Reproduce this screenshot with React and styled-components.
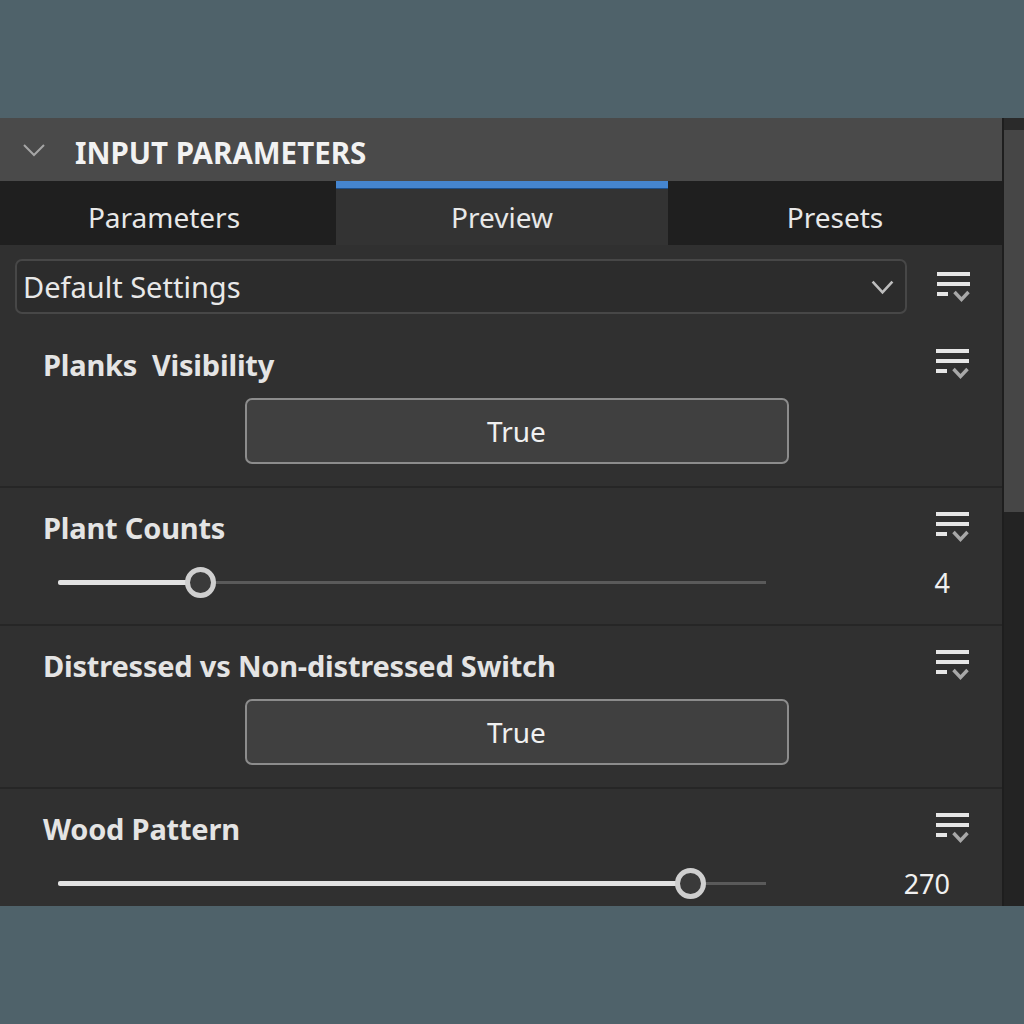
import React from "react";
import styled, { createGlobalStyle } from "styled-components";

const GlobalStyle = createGlobalStyle`
  html, body { margin: 0; padding: 0; }
  body {
    background: #4f626a;
    font-family: "Noto Sans", "Open Sans", "DejaVu Sans", sans-serif;
    color: #e6e6e6;
  }
  * { box-sizing: border-box; }
`;

const Page = styled.div`
  width: 1024px;
  height: 1024px;
  padding-top: 118px;
  overflow: hidden;
`;

const Panel = styled.div`
  display: flex;
  height: 788px;
  width: 1024px;
  overflow: hidden;
`;

const Main = styled.div`
  width: 1002px;
  display: flex;
  flex-direction: column;
  background: #303030;
  overflow: hidden;
  & > * { flex-shrink: 0; }
`;

const Scrollbar = styled.div`
  width: 22px;
  display: flex;
  flex-direction: column;
  background: #232323;
  border-left: 2px solid #1e1e1e;
`;

const ScrollTop = styled.div`
  height: 12px;
  background: #2a2a2a;
`;

const ScrollThumb = styled.div`
  height: 382px;
  background: #464646;
`;

const Header = styled.div`
  height: 63px;
  background: #4a4a4a;
  display: flex;
  align-items: center;
  padding-left: 22px;
  gap: 29px;
`;

const HeaderTitle = styled.div`
  font-weight: 700;
  font-size: 29.5px;
  color: #f2f2f2;
  padding-top: 5px;
`;

const Tabs = styled.div`
  height: 64px;
  display: grid;
  grid-template-columns: 336px 332px 1fr;
  background: #1e1e1e;
`;

const Tab = styled.div`
  display: flex;
  align-items: center;
  justify-content: center;
  font-size: 28px;
  color: #e8e8e8;
  background: ${(p) => (p.$active ? "#333333" : "#1f1f1f")};
  border-top: ${(p) => (p.$active ? "7px solid #4585cf" : "none")};
  box-shadow: ${(p) => (p.$active ? "inset 0 1px 0 #1d4f8a" : "none")};
  padding-top: ${(p) => (p.$active ? "0" : "7px")};
  padding-right: ${(p) => (p.$first ? "8px" : "0")};
`;

const Content = styled.div`
  display: flex;
  flex-direction: column;
  padding-top: 14px;
  & > * { flex-shrink: 0; }
`;

const DropdownRow = styled.div`
  display: flex;
  align-items: center;
  padding-left: 15px;
  gap: 30px;
  height: 55px;
`;

const Dropdown = styled.div`
  width: 892px;
  height: 55px;
  border: 2px solid #474747;
  border-radius: 7px;
  background: #2c2c2c;
  display: flex;
  align-items: center;
  justify-content: space-between;
  padding: 0 10px 0 6px;
  font-size: 29px;
  color: #e8e8e8;
`;

const Section = styled.div`
  height: ${(p) => p.$h}px;
  border-bottom: ${(p) => (p.$last ? "none" : "2px solid #262626")};
  display: flex;
  flex-direction: column;
  padding-top: ${(p) => p.$pt || 0}px;
`;

const TitleRow = styled.div`
  height: 50px;
  display: flex;
  align-items: center;
  justify-content: space-between;
  padding: 0 32px 0 43px;
`;

const Title = styled.div`
  font-weight: 700;
  font-size: 29px;
  letter-spacing: -0.2px;
  color: #e4e4e4;
  white-space: pre;
`;

const ButtonWrap = styled.div`
  display: flex;
  justify-content: center;
  padding: 0 12px 0 43px;
  margin-top: 9px;
`;

const ValueButton = styled.div`
  width: 544px;
  height: 66px;
  border: 2px solid #8c8c8c;
  border-radius: 7px;
  background: #404040;
  display: flex;
  align-items: center;
  justify-content: center;
  font-size: 28px;
  color: #f0f0f0;
`;

const SliderRow = styled.div`
  display: flex;
  align-items: center;
  padding: 0 52px 0 58px;
  height: 40px;
  margin-top: 10px;
`;

const Track = styled.div`
  position: relative;
  width: 708px;
  height: 3px;
  background: #5a5a5a;
`;

const Fill = styled.div`
  position: absolute;
  left: 0;
  top: -1px;
  height: 5px;
  background: #e2e2e2;
  border-radius: 2px;
`;

const Thumb = styled.div`
  position: absolute;
  top: 50%;
  width: 31px;
  height: 31px;
  margin-left: -15px;
  margin-top: -15px;
  border-radius: 50%;
  border: 5px solid #cfcfcf;
  background: #3a3a3a;
`;

const Value = styled.div`
  flex: 1;
  text-align: right;
  font-size: 27px;
  color: #f0f0f0;
`;

const MenuIcon = () => (
  <svg width="34" height="34" viewBox="0 0 34 34">
    <rect x="0" y="2" width="33" height="4" fill="#e6e6e6" />
    <rect x="0" y="12" width="33" height="4" fill="#e6e6e6" />
    <rect x="0" y="22" width="11" height="4" fill="#e6e6e6" />
    <polyline points="17.5,22 24.5,29.5 31.5,22" fill="none" stroke="#a8a8a8" strokeWidth="3.4" />
  </svg>
);

const Chevron = ({ w, h, color, sw }) => (
  <svg width={w} height={h} viewBox={`0 0 ${w} ${h}`}>
    <polyline
      points={`${sw},${sw} ${w / 2},${h - sw} ${w - sw},${sw}`}
      fill="none"
      stroke={color}
      strokeWidth={sw}
    />
  </svg>
);

const Slider = ({ frac, value }) => (
  <SliderRow>
    <Track>
      <Fill style={{ width: `${frac * 100}%` }} />
      <Thumb style={{ left: `${frac * 100}%` }} />
    </Track>
    <Value>{value}</Value>
  </SliderRow>
);

export default function App() {
  return (
    <>
      <GlobalStyle />
      <Page>
        <Panel>
          <Main>
            <Header>
              <Chevron w={24} h={14} color="#a6a6a6" sw={2} />
              <HeaderTitle>INPUT PARAMETERS</HeaderTitle>
            </Header>
            <Tabs>
              <Tab $first>Parameters</Tab>
              <Tab $active>Preview</Tab>
              <Tab>Presets</Tab>
            </Tabs>
            <Content>
              <DropdownRow>
                <Dropdown>
                  <span>Default Settings</span>
                  <Chevron w={25} h={16} color="#bdbdbd" sw={2.6} />
                </Dropdown>
                <MenuIcon />
              </DropdownRow>
              <Section $h={174} $pt={25}>
                <TitleRow>
                  <Title>{"Planks  Visibility"}</Title>
                  <MenuIcon />
                </TitleRow>
                <ButtonWrap>
                  <ValueButton>True</ValueButton>
                </ButtonWrap>
              </Section>
              <Section $h={138} $pt={14}>
                <TitleRow>
                  <Title>Plant Counts</Title>
                  <MenuIcon />
                </TitleRow>
                <Slider frac={0.2} value="4" />
              </Section>
              <Section $h={163} $pt={14}>
                <TitleRow>
                  <Title>Distressed vs Non-distressed Switch</Title>
                  <MenuIcon />
                </TitleRow>
                <ButtonWrap>
                  <ValueButton>True</ValueButton>
                </ButtonWrap>
              </Section>
              <Section $h={140} $pt={14} $last>
                <TitleRow>
                  <Title>Wood Pattern</Title>
                  <MenuIcon />
                </TitleRow>
                <Slider frac={0.893} value="270" />
              </Section>
            </Content>
          </Main>
          <Scrollbar>
            <ScrollTop />
            <ScrollThumb />
          </Scrollbar>
        </Panel>
      </Page>
    </>
  );
}
